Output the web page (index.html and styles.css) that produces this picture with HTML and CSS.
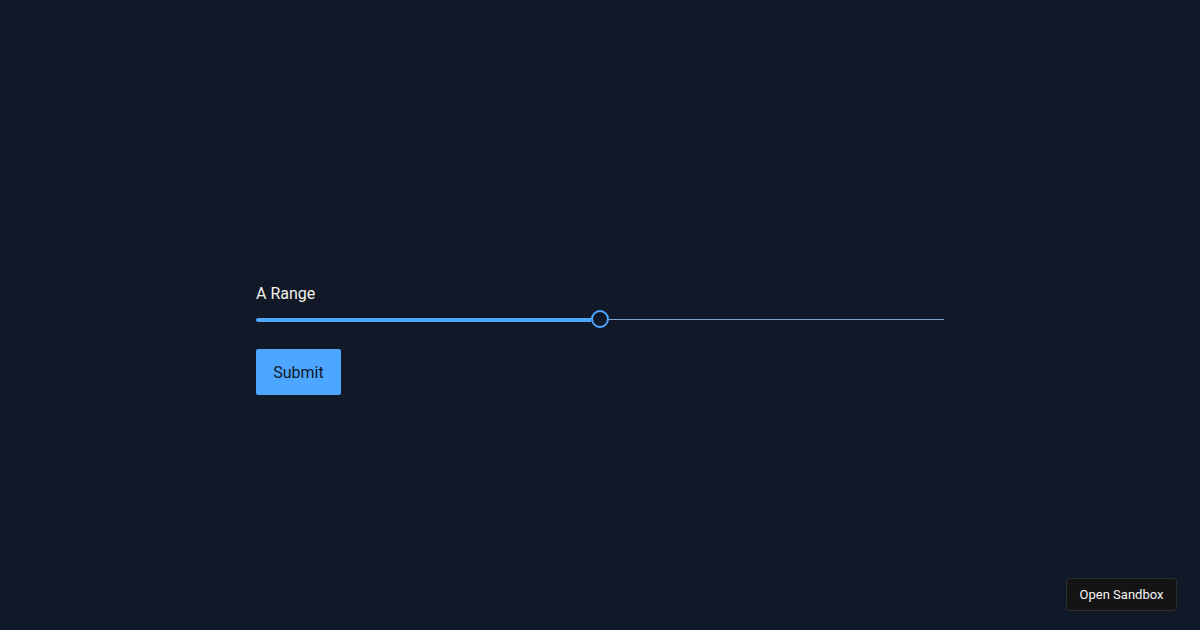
FILE: index.html
```html
<!DOCTYPE html>
<html>
<head>
<meta charset="utf-8">
<link rel="stylesheet" href="styles.css">
</head>
<body>
<main class="page">
  <form class="form">
    <label class="label">A Range</label>
    <div class="slider">
      <div class="fill"></div>
      <div class="thumb"></div>
      <div class="rest"></div>
    </div>
    <button type="button" class="submit">Submit</button>
  </form>
</main>
<button type="button" class="sandbox">Open Sandbox</button>
</body>
</html>
```
FILE: styles.css
```css
html, body {
  margin: 0;
  padding: 0;
  background: #111827;
  height: 100%;
}
body {
  font-family: Roboto, "Liberation Sans", sans-serif;
  color: #f3f4f6;
}
.page {
  padding: 282px 256px 0;
}
.form {
  display: flex;
  flex-direction: column;
  align-items: flex-start;
}
.label {
  font-size: 16px;
  line-height: 24px;
  color: #f3f1e8;
}
.slider {
  margin-top: 4px;
  width: 100%;
  height: 18px;
  display: flex;
  align-items: center;
}
.fill {
  width: calc(50% - 9px);
  height: 4px;
  background: #4da6ff;
  border-radius: 2px 0 0 2px;
  margin-top: 1px;
}
.thumb {
  box-sizing: border-box;
  width: 18px;
  height: 18px;
  border: 2px solid #4da6ff;
  border-radius: 50%;
  background: #111827;
  flex: none;
}
.rest {
  flex: 1;
  height: 1px;
  background: #7fa6d6;
  margin-top: 1px;
}
.submit {
  margin-top: 21px;
  width: 85px;
  height: 46px;
  border: none;
  border-radius: 2px;
  background: #4da6ff;
  color: #111827;
  font-family: Roboto, "Liberation Sans", sans-serif;
  font-size: 16px;
  padding: 0;
}
.sandbox {
  position: fixed;
  right: 23px;
  bottom: 19px;
  width: 111px;
  height: 33px;
  box-sizing: border-box;
  background: #141414;
  border: 1px solid #2e2e2e;
  border-radius: 4px;
  color: #f5f5f5;
  font-family: Roboto, "Liberation Sans", sans-serif;
  font-size: 13px;
  padding: 0;
}
```
